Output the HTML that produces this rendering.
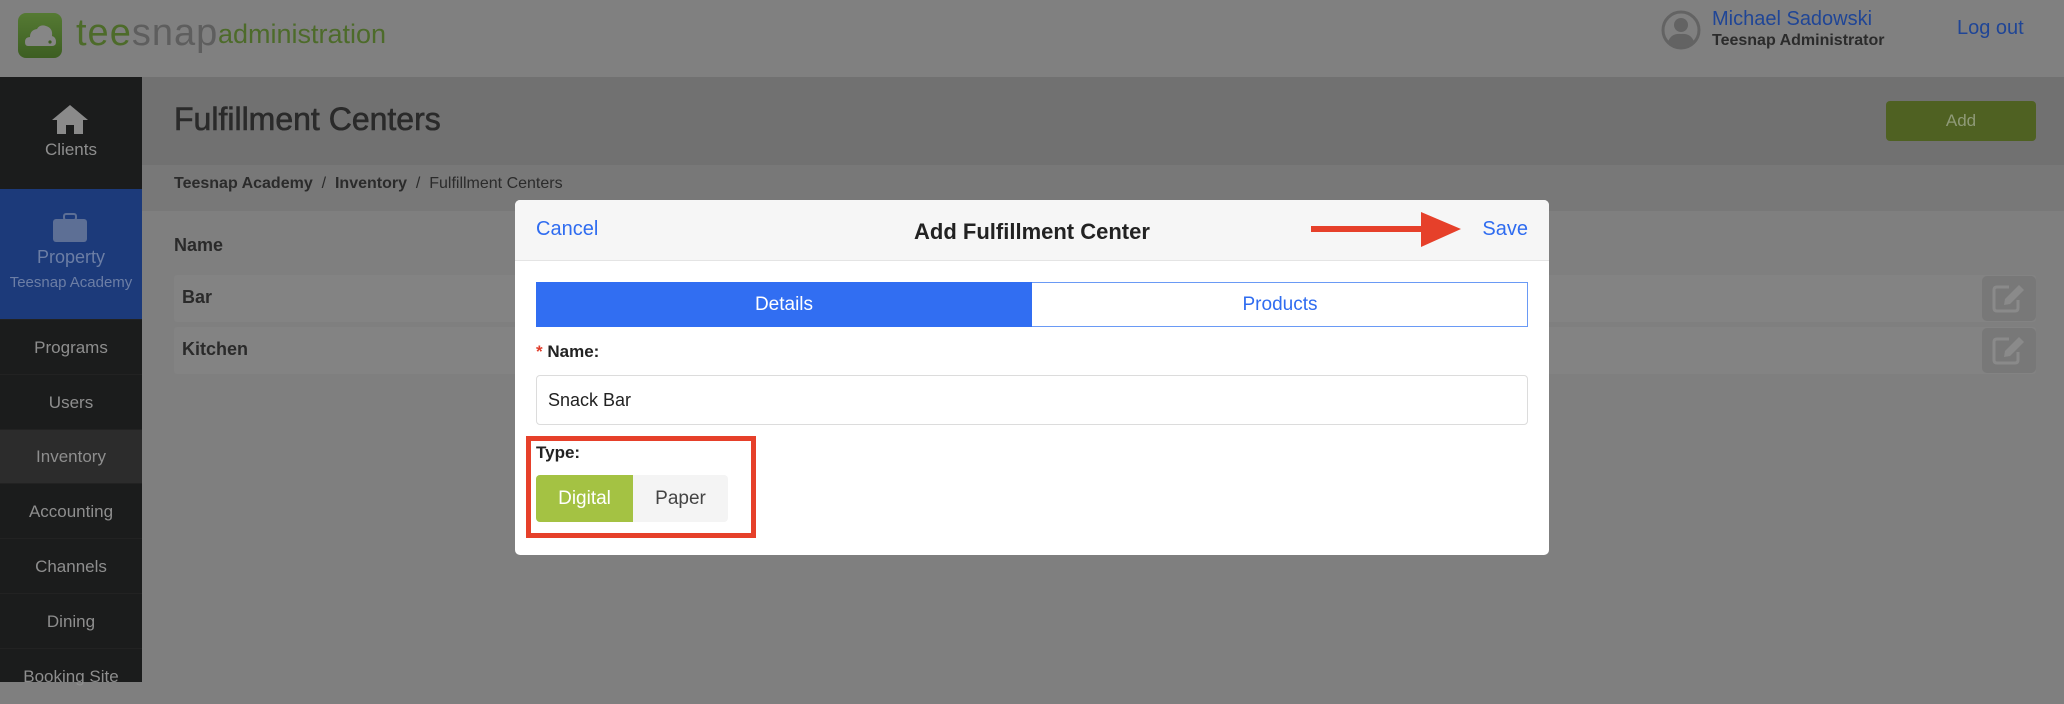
<!DOCTYPE html>
<html><head><meta charset="utf-8"><style>
*{margin:0;padding:0;box-sizing:border-box}
body{width:2064px;height:682px;overflow:hidden;position:relative;background:#7f7f7f;font-family:"Liberation Sans",sans-serif}
.abs{position:absolute}
.side{left:0;top:77px;width:142px;height:605px;background:#1b1c1c}
.si{position:absolute;left:0;width:142px;text-align:center;color:#8e8e8e;font-size:17px;border-top:1px solid #222}
.row{position:absolute;left:174px;width:1862px;height:47px;background:#838383;border-radius:3px}
.row span{position:absolute;left:8px;top:12px;font-weight:bold;font-size:18px;color:#2a2a2a}
.eb{position:absolute;right:0;top:1px;width:54px;height:45px;background:#787878;border-radius:5px}
.eb svg{position:absolute;left:10px;top:7px}
</style></head><body>
<div class="abs" style="left:0;top:0;width:2064px;height:77px;background:#808080"></div>
<div class="abs" style="left:18px;top:13px;width:44px;height:45px;border-radius:8px;background:linear-gradient(#557a33,#3d5e22)"></div>
<svg class="abs" style="left:24px;top:24px" width="34" height="24" viewBox="0 0 34 24"><path d="M4 22 Q1 22 1 18 Q1 13 6 13 Q6 6 13 5 Q16 0 22 2 Q29 4 28 12 Q32 13 32 18 Q32 22 28 22 Z" fill="#868686"/><circle cx="26" cy="18" r="1.6" fill="#3d5e22"/></svg>
<div class="abs" style="left:76px;top:12px;font-size:38px;color:#4d6b2a;letter-spacing:1px">tee<span style="color:#5e5e5e">snap</span></div>
<div class="abs" style="left:218px;top:19px;font-size:27px;color:#4d6b2a">administration</div>
<svg class="abs" style="left:1661px;top:10px" width="40" height="40" viewBox="0 0 40 40"><circle cx="20" cy="20" r="18" fill="none" stroke="#636363" stroke-width="3"/><circle cx="20" cy="15" r="7" fill="#636363"/><path d="M7 32 Q10 23 20 24 Q30 23 33 32 Q27 38 20 38 Q13 38 7 32Z" fill="#636363"/></svg>
<div class="abs" style="left:1712px;top:8px;font-size:20px;color:#1f4596">Michael Sadowski</div>
<div class="abs" style="left:1712px;top:32px;font-size:16px;font-weight:bold;color:#2b2b2b">Teesnap Administrator</div>
<div class="abs" style="left:1957px;top:17px;font-size:20px;color:#1f4596">Log out</div>
<div class="abs" style="left:142px;top:77px;width:1922px;height:88px;background:#717171"></div>
<div class="abs" style="left:174px;top:101px;font-size:32px;color:#2a2a2a;-webkit-text-stroke:0.6px #2a2a2a">Fulfillment Centers</div>
<div class="abs" style="left:1886px;top:101px;width:150px;height:40px;background:#4f6122;border-radius:4px;color:#8f9a78;font-size:17px;text-align:center;line-height:40px">Add</div>
<div class="abs" style="left:142px;top:165px;width:1922px;height:46px;background:#787878"></div>
<div class="abs" style="left:174px;top:175px;font-size:16px;color:#2b2b2b"><b>Teesnap Academy</b> &nbsp;/&nbsp; <b>Inventory</b> &nbsp;/&nbsp; Fulfillment Centers</div>
<div class="abs" style="left:174px;top:235px;font-size:18px;font-weight:bold;color:#2a2a2a">Name</div>
<div class="row" style="top:275px"><span>Bar</span><div class="eb"><svg width="34" height="30" viewBox="0 0 34 30"><path d="M17 4 H5 Q2 4 2 7 V25 Q2 28 5 28 H23 Q26 28 26 25 V17" fill="none" stroke="#8a8a8a" stroke-width="3"/><path d="M27 2 L32 7 L18 21 L12 22 L13 16 Z" fill="#8a8a8a"/></svg></div></div>
<div class="row" style="top:327px"><span>Kitchen</span><div class="eb"><svg width="34" height="30" viewBox="0 0 34 30"><path d="M17 4 H5 Q2 4 2 7 V25 Q2 28 5 28 H23 Q26 28 26 25 V17" fill="none" stroke="#8a8a8a" stroke-width="3"/><path d="M27 2 L32 7 L18 21 L12 22 L13 16 Z" fill="#8a8a8a"/></svg></div></div>
<div class="abs side"></div>
<svg class="abs" style="left:50px;top:103px" width="40" height="32" viewBox="0 0 40 32"><path d="M20 2 L38 17 L33 17 L33 31 L24 31 L24 22 L16 22 L16 31 L7 31 L7 17 L2 17 Z" fill="#8a8a8a"/></svg>
<div class="si" style="top:140px;border:0">Clients</div>
<div class="abs" style="left:0;top:189px;width:142px;height:130px;background:#1c3a7a"></div>
<svg class="abs" style="left:52px;top:213px" width="36" height="30" viewBox="0 0 36 30"><rect x="12" y="1" width="12" height="6" rx="2" fill="none" stroke="#5d6f95" stroke-width="2"/><rect x="1" y="6" width="34" height="23" rx="3" fill="#5d6f95"/></svg>
<div class="si" style="top:247px;border:0;color:#6c7ea5;font-size:18px">Property</div>
<div class="si" style="top:274px;border:0;color:#6c7ea5;font-size:15px">Teesnap Academy</div>
<div class="si" style="top:319px;height:55px;line-height:55px">Programs</div>
<div class="si" style="top:374px;height:55px;line-height:55px">Users</div>
<div class="si" style="top:429px;height:54px;line-height:54px;background:#2c2c2c">Inventory</div>
<div class="si" style="top:483px;height:55px;line-height:55px">Accounting</div>
<div class="si" style="top:538px;height:55px;line-height:55px">Channels</div>
<div class="si" style="top:593px;height:55px;line-height:55px">Dining</div>
<div class="si" style="top:648px;height:55px;line-height:55px">Booking Site</div>
<div class="abs" style="left:515px;top:200px;width:1034px;height:355px;background:#fff;border-radius:5px;overflow:hidden">
 <div class="abs" style="left:0;top:0;width:1034px;height:61px;background:#f6f6f6;border-bottom:1px solid #e4e4e4"></div>
 <div class="abs" style="left:21px;top:18px;font-size:20px;color:#2f6cf0">Cancel</div>
 <div class="abs" style="left:0;width:1034px;top:19px;text-align:center;font-size:22px;font-weight:bold;color:#222">Add Fulfillment Center</div>
 <div class="abs" style="right:21px;top:18px;font-size:20px;color:#2f6cf0">Save</div>
 <div class="abs" style="left:21px;top:82px;width:992px;height:45px;border:1px solid #6a9af5"></div>
 <div class="abs" style="left:21px;top:82px;width:496px;height:45px;background:#316ef2;color:#fff;font-size:19px;text-align:center;line-height:45px">Details</div>
 <div class="abs" style="left:517px;top:82px;width:496px;height:45px;color:#2f6cf0;font-size:19px;text-align:center;line-height:45px">Products</div>
 <div class="abs" style="left:21px;top:142px;font-size:17px;font-weight:bold;color:#222"><span style="color:#e03c2a">*</span> Name:</div>
 <div class="abs" style="left:21px;top:175px;width:992px;height:50px;border:1px solid #dcdcdc;border-radius:4px;font-size:18px;color:#222;padding:14px 11px">Snack Bar</div>
 <div class="abs" style="left:21px;top:243px;font-size:17px;font-weight:bold;color:#222">Type:</div>
 <div class="abs" style="left:21px;top:275px;width:192px;height:47px;background:#f4f4f4;border-radius:4px;overflow:hidden">
  <div class="abs" style="left:0;top:0;width:97px;height:47px;background:#a4c243;color:#fff;font-size:19px;text-align:center;line-height:47px">Digital</div>
  <div class="abs" style="left:97px;top:0;width:95px;height:47px;color:#444;font-size:19px;text-align:center;line-height:47px">Paper</div>
 </div>
 <div class="abs" style="left:11px;top:236px;width:230px;height:102px;border:5px solid #e6402a"></div>
</div>
<svg class="abs" style="left:1311px;top:212px" width="152" height="36" viewBox="0 0 152 36"><rect x="0" y="14" width="112" height="6" fill="#e6402a"/><path d="M110 0 L150 17 L110 35 Z" fill="#e6402a"/></svg>
</body></html>
